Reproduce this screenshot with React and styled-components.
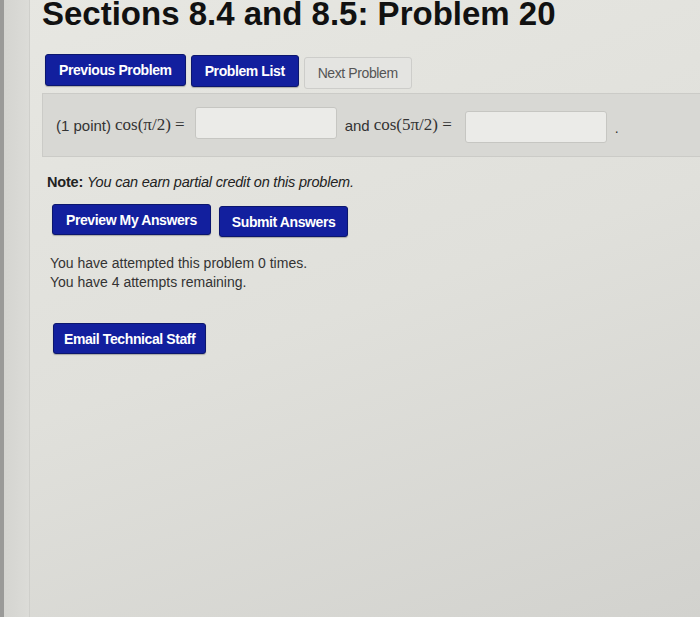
import React from "react";
import styled, { createGlobalStyle } from "styled-components";

const GlobalStyle = createGlobalStyle`
  html, body {
    margin: 0;
    padding: 0;
    height: 100%;
  }
  body {
    font-family: "Liberation Sans", Arial, sans-serif;
    color: #222;
    background: #e2e2dd;
  }
  #root {
    height: 100%;
  }
`;

const Page = styled.div`
  display: flex;
  min-height: 617px;
  overflow: hidden;
  background: linear-gradient(160deg, #e7e7e2 0%, #e0e0db 50%, #d2d2ce 100%);
`;

const SideEdge = styled.div`
  width: 26px;
  flex: none;
  border-left: 4px solid #9a9a98;
  background: linear-gradient(90deg, #d4d4d0, #dcdcd8);
  box-shadow: inset -1px 0 0 #cfcfcb;
`;

const Main = styled.div`
  flex: 1;
  padding-left: 12px;
`;

const Title = styled.h1`
  margin: -4px 0 0 0;
  font-size: 33px;
  line-height: 36px;
  font-weight: bold;
  color: #111;
  letter-spacing: 0;
`;

const NavBar = styled.div`
  display: flex;
  align-items: flex-start;
  gap: 5px;
  margin-top: 22px;
  padding-left: 3px;
`;

const Button = styled.button`
  font-family: "Liberation Sans", Arial, sans-serif;
  font-size: ${p => p.$size || 14}px;
  font-weight: ${p => (p.$ghost ? "normal" : "bold")};
  letter-spacing: -0.4px;
  height: ${p => p.$h || 32}px;
  padding: 0 ${p => p.$pad || 13}px;
  border-radius: 3px;
  color: ${p => (p.$ghost ? "#555" : "#fff")};
  background: ${p => (p.$ghost ? "#e4e4e1" : "#121f9e")};
  border: 1px solid ${p => (p.$ghost ? "#cdcdca" : "#0b166e")};
  box-shadow: ${p => (p.$ghost ? "none" : "0 1px 1px rgba(0,0,0,0.25)")};
  margin-top: ${p => p.$drop || 0}px;
  cursor: pointer;
`;

const ProblemBox = styled.div`
  display: flex;
  align-items: center;
  margin-top: 4px;
  height: 62px;
  padding-left: 13px;
  background: #d8d8d4;
  border: 1px solid #cbcbc7;
  border-right: none;
  font-size: 15px;
  color: #333;
`;

const Math = styled.span`
  font-family: "Liberation Serif", "Times New Roman", serif;
  font-size: 17px;
  margin-left: 4px;
`;

const AnswerInput = styled.input`
  width: 142px;
  height: 32px;
  box-sizing: border-box;
  margin: ${p => p.$drop || 0}px 8px 0 ${p => p.$left || 8}px;
  background: #ebebe8;
  border: 1px solid #c6c6c2;
  border-radius: 3px;
`;

const Period = styled.span`
  margin-top: 6px;
  font-size: 14px;
`;

const Note = styled.p`
  margin: 17px 0 0 5px;
  font-size: 14.5px;
  color: #222;
  letter-spacing: -0.2px;

  b {
    font-weight: bold;
  }
  i {
    font-style: italic;
  }
`;

const SubmitRow = styled.div`
  display: flex;
  align-items: flex-start;
  gap: 8px;
  margin-top: 14px;
  padding-left: 10px;
`;

const Attempts = styled.div`
  margin: 17px 0 0 8px;
  font-size: 14px;
  line-height: 19px;
  color: #333;
`;

const StaffRow = styled.div`
  margin-top: 31px;
  padding-left: 11px;
`;

export default function App() {
  return (
    <>
      <GlobalStyle />
      <Page>
        <SideEdge />
        <Main>
          <Title>Sections 8.4 and 8.5: Problem 20</Title>

          <NavBar>
            <Button $h={32}>Previous Problem</Button>
            <Button $h={32} $drop={1}>Problem List</Button>
            <Button $ghost $h={32} $drop={3}>Next Problem</Button>
          </NavBar>

          <ProblemBox>
            (1 point)<Math>cos(π/2) =</Math>
            <AnswerInput $drop={-4} $left={10} />
            and<Math>cos(5π/2) =</Math>
            <AnswerInput $drop={4} $left={13} />
            <Period>.</Period>
          </ProblemBox>

          <Note>
            <b>Note:</b> <i>You can earn partial credit on this problem.</i>
          </Note>

          <SubmitRow>
            <Button $h={31} $pad={13}>Preview My Answers</Button>
            <Button $h={31} $pad={12} $drop={2}>Submit Answers</Button>
          </SubmitRow>

          <Attempts>
            You have attempted this problem 0 times.
            <br />
            You have 4 attempts remaining.
          </Attempts>

          <StaffRow>
            <Button $h={31} $pad={10}>Email Technical Staff</Button>
          </StaffRow>
        </Main>
      </Page>
    </>
  );
}
